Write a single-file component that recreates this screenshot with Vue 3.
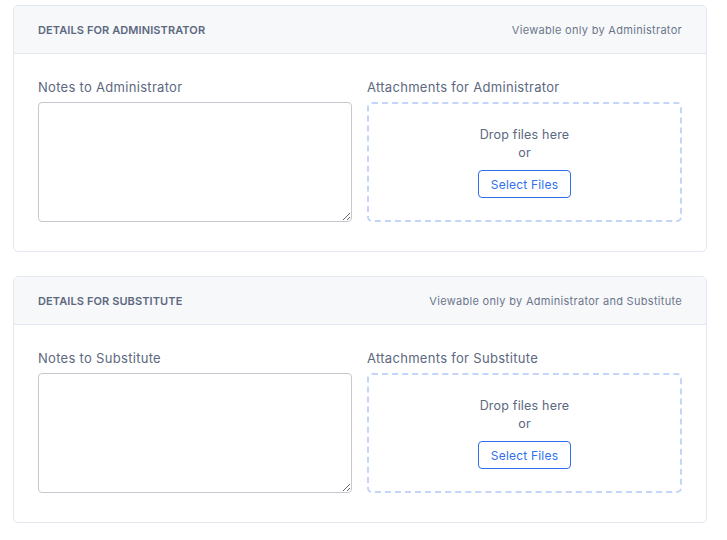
<template>
  <div class="page">
    <section v-for="card in cards" :key="card.name" class="card">
      <header class="card-header">
        <h3>Details for {{ card.name }}</h3>
        <span class="viewable">{{ card.viewable }}</span>
      </header>
      <div class="card-body">
        <div class="field">
          <label>Notes to {{ card.name }}</label>
          <textarea class="notes"></textarea>
        </div>
        <div class="field">
          <label>Attachments for {{ card.name }}</label>
          <div class="dropzone">
            <div class="drop-text">Drop files here</div>
            <div class="drop-text">or</div>
            <button class="select-btn" type="button">Select Files</button>
          </div>
        </div>
      </div>
    </section>
  </div>
</template>

<script setup>
const cards = [
  { name: 'Administrator', viewable: 'Viewable only by Administrator' },
  { name: 'Substitute', viewable: 'Viewable only by Administrator and Substitute' }
];
</script>

<style>
html,
body {
  background: #fff;
}
</style>

<style scoped>
.page {
  display: flex;
  flex-direction: column;
  gap: 24px;
  width: 694px;
  margin-left: 13px;
  padding-top: 5px;
  font-family: Inter, "Liberation Sans", sans-serif;
  color: #5c6880;
}

.card {
  box-sizing: border-box;
  height: 247px;
  border: 1px solid #e3e7f0;
  border-radius: 5px;
  overflow: hidden;
}

.card-header {
  box-sizing: border-box;
  height: 48px;
  display: flex;
  justify-content: space-between;
  align-items: center;
  padding: 0 24px;
  background: #f7f8fa;
  border-bottom: 1px solid #e3e7f0;
}

.card-header h3 {
  margin: 0;
  font-size: 11px;
  font-weight: 600;
  letter-spacing: 0.1px;
  text-transform: uppercase;
  color: #5c6880;
}

.viewable {
  font-size: 11px;
  letter-spacing: 0.3px;
  color: #6b768c;
}

.card-body {
  display: grid;
  grid-template-columns: 314px 315px;
  gap: 15px;
  padding: 24px 24px 0;
}

.field {
  display: flex;
  flex-direction: column;
}

.field label {
  height: 24px;
  line-height: 18px;
  font-size: 13px;
  letter-spacing: 0.3px;
  color: #5c6880;
}

.notes {
  box-sizing: border-box;
  display: block;
  width: 314px;
  height: 120px;
  margin: 0;
  border: 1px solid #c6c8d0;
  border-radius: 4px;
  background: #fff;
  outline: none;
}

.dropzone {
  box-sizing: border-box;
  height: 120px;
  display: flex;
  flex-direction: column;
  align-items: center;
  padding-top: 22px;
  border: 2px dashed #c3d5f8;
  border-radius: 5px;
}

.drop-text {
  height: 18px;
  line-height: 18px;
  font-size: 12.5px;
  letter-spacing: 0.2px;
  color: #5c6880;
}

.select-btn {
  box-sizing: border-box;
  width: 93px;
  height: 28px;
  margin-top: 8px;
  padding: 0;
  border: 1px solid #2f6fed;
  border-radius: 4px;
  background: #fff;
  font-family: inherit;
  font-size: 12px;
  letter-spacing: 0.2px;
  color: #2f6fed;
}
</style>
